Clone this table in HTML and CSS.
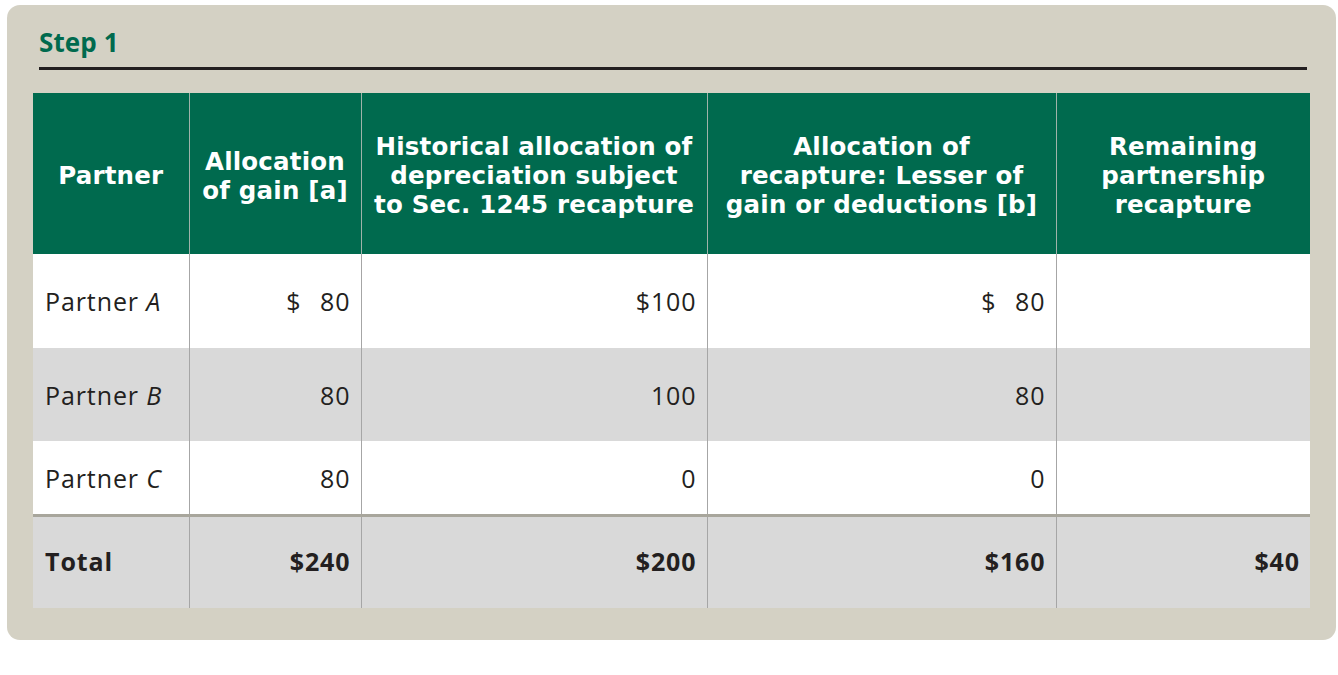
FILE: index.html
```html
<!DOCTYPE html>
<html>
<head>
<meta charset="utf-8">
<link rel="stylesheet" href="styles.css">
</head>
<body>
<div class="panel">
  <div class="title-wrap">
    <h2 class="title">Step 1</h2>
  </div>
  <table class="grid">
    <colgroup>
      <col class="c1"><col class="c2"><col class="c3"><col class="c4"><col class="c5">
    </colgroup>
    <thead>
      <tr class="head">
        <th>Partner</th>
        <th>Allocation<br>of gain [a]</th>
        <th>Historical allocation of<br>depreciation subject<br>to Sec. 1245 recapture</th>
        <th>Allocation of<br>recapture: Lesser of<br>gain or deductions [b]</th>
        <th>Remaining<br>partnership<br>recapture</th>
      </tr>
    </thead>
    <tbody>
      <tr class="r1">
        <td class="name">Partner <i>A</i></td>
        <td>$&#8199;&#8202;80</td>
        <td>$100</td>
        <td>$&#8199;&#8202;80</td>
        <td></td>
      </tr>
      <tr class="r2 alt">
        <td class="name">Partner <i>B</i></td>
        <td>80</td>
        <td>100</td>
        <td>80</td>
        <td></td>
      </tr>
      <tr class="r3">
        <td class="name">Partner <i>C</i></td>
        <td>80</td>
        <td>0</td>
        <td>0</td>
        <td></td>
      </tr>
      <tr class="total alt">
        <td class="name">Total</td>
        <td>$240</td>
        <td>$200</td>
        <td>$160</td>
        <td>$40</td>
      </tr>
    </tbody>
  </table>
</div>
</body>
</html>
```

FILE: styles.css
```css
html, body {
  margin: 0;
  padding: 0;
  background: #ffffff;
}

body {
  font-family: "Open Sans", "Liberation Sans", sans-serif;
  color: #231f20;
}

.panel {
  margin: 5px 0 0 7px;
  width: 1329px;
  height: 635px;
  box-sizing: border-box;
  background: #d4d1c4;
  border-radius: 13px;
  padding: 22px 26px 0 26px;
}

.title-wrap {
  margin: 0 3px 0 6px;
  border-bottom: 3px solid #231f20;
  height: 40px;
}

.title {
  margin: 0;
  font-size: 26px;
  line-height: 31px;
  font-weight: 700;
  color: #006a4e;
  letter-spacing: 0.1px;
}

.grid {
  margin-top: 23px;
  width: 1277px;
  border-collapse: collapse;
  table-layout: fixed;
}

.c1 { width: 156px; }
.c2 { width: 172px; }
.c3 { width: 346px; }
.c4 { width: 349px; }
.c5 { width: 254px; }

.head th {
  background: #006a4e;
  color: #ffffff;
  height: 157px;
  padding: 4px 0 0 0;
  font-family: "DejaVu Sans", "Open Sans", sans-serif;
  font-size: 24.5px;
  line-height: 29px;
  font-weight: 700;
  letter-spacing: 0.2px;
  text-align: center;
  vertical-align: middle;
  border-left: 1px solid #9fb3aa;
}

.head th:first-child {
  border-left: none;
}

tbody td {
  background: #ffffff;
  font-size: 25px;
  letter-spacing: 0.9px;
  text-align: right;
  padding: 0 10px 0 12px;
  border-left: 1px solid #a6a6a6;
  vertical-align: middle;
}

tbody td:first-child {
  border-left: none;
}

tbody td.name {
  text-align: left;
}

tbody tr.alt td {
  background: #d9d9d9;
}

.r1 td { height: 94px; }
.r2 td { height: 93px; }
.r3 td { height: 73px; }

.total td {
  height: 88px;
  padding-bottom: 3px;
  font-weight: 700;
  border-top: 3px solid #a8a69c;
}
```
